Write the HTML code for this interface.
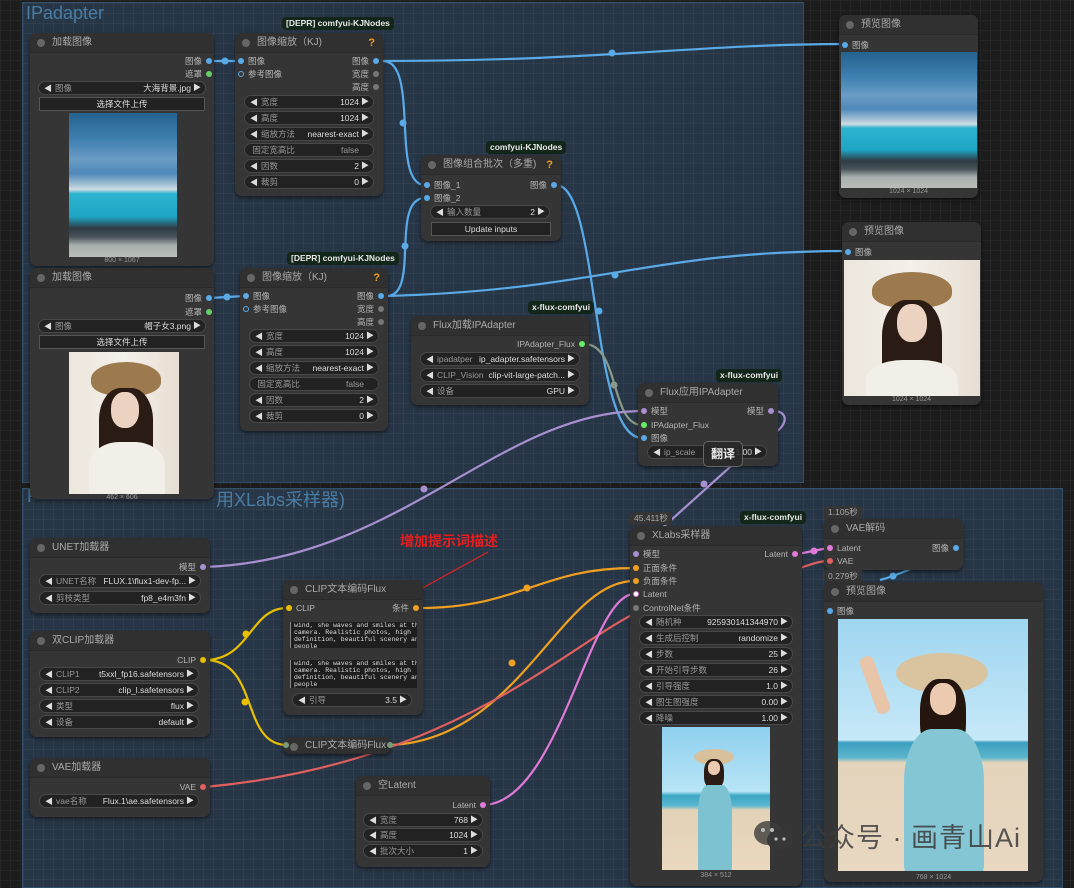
<!DOCTYPE html>
<html><head><meta charset="utf-8"><style>
*{margin:0;padding:0;box-sizing:border-box}
body{width:1074px;height:879px;overflow:hidden;position:relative;font-family:"Liberation Sans","Noto Sans CJK SC",sans-serif;background:#1c1c1c;
background-image:linear-gradient(#252525 1px,transparent 1px),linear-gradient(90deg,#252525 1px,transparent 1px);background-size:10px 10px}
.grp{position:absolute;background-color:#273646;border:1px solid #33506a;
background-image:linear-gradient(rgba(255,255,255,.035) 1px,transparent 1px),linear-gradient(90deg,rgba(255,255,255,.035) 1px,transparent 1px);background-size:10px 10px}
.gt{position:absolute;color:#4a7ca3;font-size:18px;white-space:nowrap}
.n{position:absolute;background:#353535;border-radius:7px;box-shadow:0 2px 4px rgba(0,0,0,.5)}
.t{height:20px;background:#303030;border-radius:7px 7px 0 0;border-bottom:1px solid #2a2a2a;color:#aaa;font-size:10px;line-height:20px;padding-left:22px;position:relative;white-space:nowrap}
.t:before{content:"";position:absolute;left:7px;top:6px;width:8px;height:8px;border-radius:50%;background:#666}
.q{position:absolute;right:8px;top:0;color:#f0a020;font-weight:bold;font-size:11px}
.s{position:absolute;font-size:8.5px;color:#b5b5b5;white-space:nowrap;line-height:10px}
.d{position:absolute;width:6px;height:6px;border-radius:50%}
.w{position:absolute;height:14px;border-radius:8px;background:#222;border:1px solid #484848;font-size:8.5px;color:#ddd;line-height:12px;white-space:nowrap;overflow:hidden}
.w .l{position:absolute;left:5px;color:#999}
.w .l b{color:#ddd;font-weight:normal;font-size:8px;margin-right:3px}
.w .v{position:absolute;right:14px}
.w .r{position:absolute;right:4px;font-size:8px}
.btn{position:absolute;height:14px;background:#222;border:1px solid #555;color:#ddd;font-size:8.5px;text-align:center;line-height:12px}
.bd{position:absolute;background:#12261a;color:#e8e8e8;font-size:8.5px;font-weight:bold;border-radius:4px;padding:0 4px;height:13px;line-height:13px;white-space:nowrap}
.tm{position:absolute;background:#353535;color:#aaa;font-size:8.5px;height:13px;line-height:13px;padding:0 4px;border-radius:4px 4px 0 0}
.cap{position:absolute;font-size:7px;color:#999;text-align:center}
.sea{position:absolute;background:linear-gradient(180deg,#25628f 0%,#3d7fb0 18%,#6a9cc4 32%,#4f88b8 42%,#a8c4d8 50%,#d0dde4 53%,#2cb4cf 56%,#1ea5c4 72%,#2e3b44 80%,#48545a 86%,#a9b0ae 92%,#b9bdb8 100%)}
.ta{position:absolute;background:#1e1e1e;color:#ddd;font-family:"Liberation Mono",monospace;font-size:6.5px;line-height:7px;padding-left:3px;overflow:hidden;border-left:1px solid #888;white-space:nowrap}
</style></head><body>

<div class="grp" style="left:22px;top:2px;width:782px;height:481px"></div>
<div class="gt" style="left:26px;top:3px">IPadapter</div>
<div class="grp" style="left:22px;top:488px;width:1041px;height:400px"></div>
<div class="gt" style="left:27px;top:486px">F</div>
<div class="gt" style="left:216px;top:486px">用XLabs采样器)</div>

<svg width="1074" height="879" style="position:absolute;left:0;top:0" fill="none" stroke-width="2.2">
<g stroke="#5aaae8">
<path d="M210 61 L240 61"/>
<path d="M383 61 C600 61,700 44,844 44"/>
<path d="M383 61 C420 61,390 185,425 185"/>
<path d="M387 296 C420 296,390 198,425 198"/>
<path d="M387 296 C600 290,650 251,848 251"/>
<path d="M210 298 L244 296"/>
<path d="M556 185 C600 185,590 438,642 438"/>
<path d="M958 548 C930 560,900 575,880 580"/>
</g>
<g fill="#5aaae8"><circle cx="225" cy="61" r="3.5"/><circle cx="612" cy="53" r="3.5"/><circle cx="403" cy="123" r="3.5"/><circle cx="405" cy="246" r="3.5"/><circle cx="615" cy="275" r="3.5"/><circle cx="599" cy="311" r="3.5"/><circle cx="227" cy="297" r="3.5"/><circle cx="893" cy="576" r="3.5"/></g>
<path d="M584 344 C620 344,610 425,642 425" stroke="#8a9a88"/><circle cx="614" cy="385" r="3.5" fill="#8a9a88"/>
<g stroke="#a890d0">
<path d="M205 567 C400 560,500 411,642 411"/>
<path d="M774 411 C790 411,790 430,760 440 L660 530 C640 545,630 554,634 554"/>
</g>
<g fill="#a890d0"><circle cx="424" cy="489" r="3.5"/><circle cx="704" cy="484" r="3.5"/></g>
<g stroke="#e8c000"><path d="M205 660 C250 660,250 608,287 608"/><path d="M205 660 C260 660,240 745,287 745"/></g>
<g fill="#e8c000"><circle cx="246" cy="634" r="3.5"/><circle cx="245" cy="702" r="3.5"/></g>
<g stroke="#f0a020"><path d="M419 608 C520 608,540 568,634 568"/><path d="M390 745 C520 740,560 581,634 581"/></g>
<g fill="#f0a020"><circle cx="527" cy="588" r="3.5"/><circle cx="512" cy="663" r="3.5"/></g>
<g stroke="#e06060"><path d="M205 787 C500 760,600 600,680 600 L800 568 C815 563,820 561,828 561"/></g>
<g stroke="#e07ad8"><path d="M485 805 C560 800,590 594,634 594"/><path d="M798 554 L828 548"/></g>
<circle cx="814" cy="551" r="3.5" fill="#e07ad8"/>
<path d="M488 552 L368 618" stroke="#e02020" stroke-width="1.2"/><path d="M362 621 L372 611 L374 619 Z" fill="#e02020" stroke="#e02020"/>
</svg>

<div class="n" style="left:30px;top:33px;width:184px;height:233px"><div class="t">加载图像</div>
<div class="s" style="right:12px;top:23px">图像</div><div class="d" style="right:2px;top:25px;background:#5aaae8"></div>
<div class="s" style="right:12px;top:36px">遮罩</div><div class="d" style="right:2px;top:38px;background:#6c6"></div>
<div class="w" style="left:8px;top:48px;width:168px"><span class="l"><b>◀</b>图像</span><span class="v">大海背景.jpg</span><span class="r">▶</span></div>
<div class="btn" style="left:9px;top:64px;width:166px">选择文件上传</div>
<div class="sea" style="left:39px;top:80px;width:108px;height:144px"></div>
<div class="cap" style="left:0;width:184px;top:224px">800 × 1067</div></div>

<div class="bd" style="left:282px;top:17px">[DEPR] comfyui-KJNodes</div>
<div class="n" style="left:235px;top:33px;width:148px;height:163px"><div class="t">图像缩放（KJ)<span class="q">?</span></div>
<div class="d" style="left:3px;top:25px;background:#5aaae8"></div><div class="s" style="left:13px;top:23px">图像</div>
<div class="d" style="left:3px;top:38px;border:1.5px solid #5aaae8"></div><div class="s" style="left:13px;top:36px">参考图像</div>
<div class="s" style="right:14px;top:23px">图像</div><div class="d" style="right:4px;top:25px;background:#5aaae8"></div>
<div class="s" style="right:14px;top:36px">宽度</div><div class="d" style="right:4px;top:38px;background:#777"></div>
<div class="s" style="right:14px;top:49px">高度</div><div class="d" style="right:4px;top:51px;background:#777"></div>
<div class="w" style="left:9px;top:62px;width:130px"><span class="l"><b>◀</b>宽度</span><span class="v">1024</span><span class="r">▶</span></div>
<div class="w" style="left:9px;top:78px;width:130px"><span class="l"><b>◀</b>高度</span><span class="v">1024</span><span class="r">▶</span></div>
<div class="w" style="left:9px;top:94px;width:130px"><span class="l"><b>◀</b>缩放方法</span><span class="v">nearest-exact</span><span class="r">▶</span></div>
<div class="w" style="left:9px;top:110px;width:130px"><span class="l">&nbsp;固定宽高比</span><span class="v" style="color:#999">false</span></div>
<div class="w" style="left:9px;top:126px;width:130px"><span class="l"><b>◀</b>因数</span><span class="v">2</span><span class="r">▶</span></div>
<div class="w" style="left:9px;top:142px;width:130px"><span class="l"><b>◀</b>裁剪</span><span class="v">0</span><span class="r">▶</span></div></div>

<div class="n" style="left:30px;top:268px;width:184px;height:231px"><div class="t">加载图像</div>
<div class="s" style="right:12px;top:25px">图像</div><div class="d" style="right:2px;top:27px;background:#5aaae8"></div>
<div class="s" style="right:12px;top:39px">遮罩</div><div class="d" style="right:2px;top:41px;background:#6c6"></div>
<div class="w" style="left:8px;top:51px;width:168px"><span class="l"><b>◀</b>图像</span><span class="v">帽子女3.png</span><span class="r">▶</span></div>
<div class="btn" style="left:9px;top:67px;width:166px">选择文件上传</div>
<div style="position:absolute;left:39px;top:84px;width:110px;height:142px;background:linear-gradient(90deg,#ece6dc,#f4f0ea,#e6ded2);overflow:hidden">
<div style="position:absolute;left:22px;top:10px;width:70px;height:34px;border-radius:50% 50% 40% 40%;background:#9c7a4e"></div>
<div style="position:absolute;left:30px;top:36px;width:54px;height:80px;border-radius:40% 40% 10% 10%;background:#2a1c14"></div>
<div style="position:absolute;left:42px;top:40px;width:28px;height:36px;border-radius:45%;background:#ecd2c0"></div>
<div style="position:absolute;left:20px;top:90px;width:76px;height:60px;border-radius:40% 40% 0 0;background:#f2efe8"></div></div>
<div class="cap" style="left:0;width:184px;top:226px">462 × 606</div></div>

<div class="bd" style="left:287px;top:252px">[DEPR] comfyui-KJNodes</div>
<div class="n" style="left:240px;top:268px;width:148px;height:163px"><div class="t">图像缩放（KJ)<span class="q">?</span></div>
<div class="d" style="left:3px;top:25px;background:#5aaae8"></div><div class="s" style="left:13px;top:23px">图像</div>
<div class="d" style="left:3px;top:38px;border:1.5px solid #5aaae8"></div><div class="s" style="left:13px;top:36px">参考图像</div>
<div class="s" style="right:14px;top:23px">图像</div><div class="d" style="right:4px;top:25px;background:#5aaae8"></div>
<div class="s" style="right:14px;top:36px">宽度</div><div class="d" style="right:4px;top:38px;background:#777"></div>
<div class="s" style="right:14px;top:49px">高度</div><div class="d" style="right:4px;top:51px;background:#777"></div>
<div class="w" style="left:9px;top:61px;width:130px"><span class="l"><b>◀</b>宽度</span><span class="v">1024</span><span class="r">▶</span></div>
<div class="w" style="left:9px;top:77px;width:130px"><span class="l"><b>◀</b>高度</span><span class="v">1024</span><span class="r">▶</span></div>
<div class="w" style="left:9px;top:93px;width:130px"><span class="l"><b>◀</b>缩放方法</span><span class="v">nearest-exact</span><span class="r">▶</span></div>
<div class="w" style="left:9px;top:109px;width:130px"><span class="l">&nbsp;固定宽高比</span><span class="v" style="color:#999">false</span></div>
<div class="w" style="left:9px;top:125px;width:130px"><span class="l"><b>◀</b>因数</span><span class="v">2</span><span class="r">▶</span></div>
<div class="w" style="left:9px;top:141px;width:130px"><span class="l"><b>◀</b>裁剪</span><span class="v">0</span><span class="r">▶</span></div></div>

<div class="bd" style="left:486px;top:141px">comfyui-KJNodes</div>
<div class="n" style="left:421px;top:155px;width:140px;height:86px"><div class="t">图像组合批次（多重)<span class="q">?</span></div>
<div class="d" style="left:3px;top:27px;background:#5aaae8"></div><div class="s" style="left:13px;top:25px">图像_1</div>
<div class="d" style="left:3px;top:40px;background:#5aaae8"></div><div class="s" style="left:13px;top:38px">图像_2</div>
<div class="s" style="right:14px;top:25px">图像</div><div class="d" style="right:4px;top:27px;background:#5aaae8"></div>
<div class="w" style="left:9px;top:50px;width:120px"><span class="l"><b>◀</b>输入数量</span><span class="v">2</span><span class="r">▶</span></div>
<div class="btn" style="left:10px;top:67px;width:120px">Update inputs</div></div>

<div class="bd" style="left:528px;top:301px">x-flux-comfyui</div>
<div class="n" style="left:411px;top:316px;width:178px;height:89px"><div class="t">Flux加载IPAdapter</div>
<div class="s" style="right:14px;top:23px">IPAdapter_Flux</div><div class="d" style="right:4px;top:25px;background:#6e6"></div>
<div class="w" style="left:9px;top:36px;width:160px"><span class="l"><b>◀</b>ipadatper</span><span class="v">ip_adapter.safetensors</span><span class="r">▶</span></div>
<div class="w" style="left:9px;top:52px;width:160px"><span class="l"><b>◀</b>CLIP_Vision</span><span class="v">clip-vit-large-patch...</span><span class="r">▶</span></div>
<div class="w" style="left:9px;top:68px;width:160px"><span class="l"><b>◀</b>设备</span><span class="v">GPU</span><span class="r">▶</span></div></div>

<div class="bd" style="left:716px;top:369px">x-flux-comfyui</div>
<div class="n" style="left:638px;top:383px;width:140px;height:83px"><div class="t">Flux应用IPAdapter</div>
<div class="d" style="left:3px;top:25px;background:#a890d0"></div><div class="s" style="left:13px;top:23px">模型</div>
<div class="d" style="left:3px;top:39px;background:#6e6"></div><div class="s" style="left:13px;top:37px">IPAdapter_Flux</div>
<div class="d" style="left:3px;top:52px;background:#5aaae8"></div><div class="s" style="left:13px;top:50px">图像</div>
<div class="s" style="right:14px;top:23px">模型</div><div class="d" style="right:4px;top:25px;background:#a890d0"></div>
<div class="w" style="left:9px;top:62px;width:120px"><span class="l"><b>◀</b>ip_scale</span><span class="v">1.00</span><span class="r">▶</span></div></div>
<div style="position:absolute;left:703px;top:441px;width:40px;height:26px;border:1px solid #666;border-radius:5px;background:rgba(40,40,40,.85);color:#eee;font-size:12px;font-weight:bold;text-align:center;line-height:24px">翻译</div>

<div class="n" style="left:839px;top:15px;width:139px;height:183px"><div class="t">预览图像</div>
<div class="d" style="left:3px;top:27px;background:#5aaae8"></div><div class="s" style="left:13px;top:25px">图像</div>
<div class="sea" style="left:2px;top:37px;width:136px;height:136px"></div>
<div class="cap" style="left:0;width:139px;top:173px">1024 × 1024</div></div>

<div class="n" style="left:842px;top:222px;width:139px;height:183px"><div class="t">预览图像</div>
<div class="d" style="left:3px;top:27px;background:#5aaae8"></div><div class="s" style="left:13px;top:25px">图像</div>
<div style="position:absolute;left:2px;top:38px;width:136px;height:136px;background:linear-gradient(90deg,#ece6dc,#f4f0ea,#e6ded2);overflow:hidden">
<div style="position:absolute;left:28px;top:12px;width:80px;height:36px;border-radius:50% 50% 40% 40%;background:#9c7a4e"></div>
<div style="position:absolute;left:38px;top:40px;width:60px;height:90px;border-radius:40% 40% 10% 10%;background:#2a1c14"></div>
<div style="position:absolute;left:53px;top:44px;width:30px;height:38px;border-radius:45%;background:#ecd2c0"></div>
<div style="position:absolute;left:22px;top:100px;width:92px;height:50px;border-radius:40% 40% 0 0;background:#f2efe8"></div></div>
<div class="cap" style="left:0;width:139px;top:174px">1024 × 1024</div></div>

<div class="n" style="left:30px;top:538px;width:180px;height:75px"><div class="t">UNET加载器</div>
<div class="s" style="right:14px;top:24px">模型</div><div class="d" style="right:4px;top:26px;background:#a890d0"></div>
<div class="w" style="left:9px;top:36px;width:162px"><span class="l"><b>◀</b>UNET名称</span><span class="v">FLUX.1\flux1-dev-fp...</span><span class="r">▶</span></div>
<div class="w" style="left:9px;top:53px;width:162px"><span class="l"><b>◀</b>剪枝类型</span><span class="v">fp8_e4m3fn</span><span class="r">▶</span></div></div>

<div class="n" style="left:30px;top:631px;width:180px;height:106px"><div class="t">双CLIP加载器</div>
<div class="s" style="right:14px;top:24px">CLIP</div><div class="d" style="right:4px;top:26px;background:#e8c000"></div>
<div class="w" style="left:9px;top:36px;width:160px"><span class="l"><b>◀</b>CLIP1</span><span class="v">t5xxl_fp16.safetensors</span><span class="r">▶</span></div>
<div class="w" style="left:9px;top:52px;width:160px"><span class="l"><b>◀</b>CLIP2</span><span class="v">clip_l.safetensors</span><span class="r">▶</span></div>
<div class="w" style="left:9px;top:68px;width:160px"><span class="l"><b>◀</b>类型</span><span class="v">flux</span><span class="r">▶</span></div>
<div class="w" style="left:9px;top:84px;width:160px"><span class="l"><b>◀</b>设备</span><span class="v">default</span><span class="r">▶</span></div></div>

<div class="n" style="left:30px;top:758px;width:180px;height:59px"><div class="t">VAE加载器</div>
<div class="s" style="right:14px;top:24px">VAE</div><div class="d" style="right:4px;top:26px;background:#e06060"></div>
<div class="w" style="left:9px;top:36px;width:160px"><span class="l"><b>◀</b>vae名称</span><span class="v">Flux.1\ae.safetensors</span><span class="r">▶</span></div></div>

<div class="n" style="left:283px;top:580px;width:140px;height:135px"><div class="t">CLIP文本编码Flux</div>
<div class="d" style="left:3px;top:25px;background:#e8c000"></div><div class="s" style="left:13px;top:23px">CLIP</div>
<div class="s" style="right:14px;top:23px">条件</div><div class="d" style="right:4px;top:25px;background:#f0a020"></div>
<div class="ta" style="left:7px;top:42px;width:127px;height:26px;padding-top:0">wind, she waves and smiles at the<br>camera. Realistic photos, high<br>definition, beautiful scenery and<br>people</div>
<div class="ta" style="left:7px;top:80px;width:127px;height:28px">wind, she waves and smiles at the<br>camera. Realistic photos, high<br>definition, beautiful scenery and<br>people</div>
<div class="w" style="left:9px;top:113px;width:120px"><span class="l"><b>◀</b>引导</span><span class="v">3.5</span><span class="r">▶</span></div></div>

<div class="n" style="left:283px;top:737px;width:108px;height:17px"><div class="t" style="height:17px;line-height:17px;border-radius:7px">CLIP文本编码Flux</div></div>
<div class="d" style="left:283px;top:742px;background:#7a9a7a"></div><div class="d" style="left:387px;top:742px;background:#7a9a7a"></div>

<div style="position:absolute;left:400px;top:531px;color:#e81c1c;font-size:14px;font-weight:bold">增加提示词描述</div>

<div class="n" style="left:356px;top:776px;width:134px;height:91px"><div class="t">空Latent</div>
<div class="s" style="right:14px;top:24px">Latent</div><div class="d" style="right:4px;top:26px;background:#e07ad8"></div>
<div class="w" style="left:7px;top:37px;width:120px"><span class="l"><b>◀</b>宽度</span><span class="v">768</span><span class="r">▶</span></div>
<div class="w" style="left:7px;top:52px;width:120px"><span class="l"><b>◀</b>高度</span><span class="v">1024</span><span class="r">▶</span></div>
<div class="w" style="left:7px;top:68px;width:120px"><span class="l"><b>◀</b>批次大小</span><span class="v">1</span><span class="r">▶</span></div></div>

<div class="tm" style="left:630px;top:512px">45.411秒</div>
<div class="bd" style="left:740px;top:511px">x-flux-comfyui</div>
<div class="n" style="left:630px;top:526px;width:172px;height:360px"><div class="t">XLabs采样器</div>
<div class="d" style="left:3px;top:25px;background:#a890d0"></div><div class="s" style="left:13px;top:23px">模型</div>
<div class="d" style="left:3px;top:39px;background:#f0a020"></div><div class="s" style="left:13px;top:37px">正面条件</div>
<div class="d" style="left:3px;top:52px;background:#f0a020"></div><div class="s" style="left:13px;top:50px">负面条件</div>
<div class="d" style="left:3px;top:65px;border:1.5px solid #e07ad8;background:#fff"></div><div class="s" style="left:13px;top:63px">Latent</div>
<div class="d" style="left:3px;top:79px;background:#777"></div><div class="s" style="left:13px;top:77px">ControlNet条件</div>
<div class="s" style="right:14px;top:23px">Latent</div><div class="d" style="right:4px;top:25px;background:#e07ad8"></div>
<div class="w" style="left:9px;top:89px;width:154px"><span class="l"><b>◀</b>随机种</span><span class="v">925930141344970</span><span class="r">▶</span></div>
<div class="w" style="left:9px;top:105px;width:154px"><span class="l"><b>◀</b>生成后控制</span><span class="v">randomize</span><span class="r">▶</span></div>
<div class="w" style="left:9px;top:121px;width:154px"><span class="l"><b>◀</b>步数</span><span class="v">25</span><span class="r">▶</span></div>
<div class="w" style="left:9px;top:137px;width:154px"><span class="l"><b>◀</b>开始引导步数</span><span class="v">26</span><span class="r">▶</span></div>
<div class="w" style="left:9px;top:153px;width:154px"><span class="l"><b>◀</b>引导强度</span><span class="v">1.0</span><span class="r">▶</span></div>
<div class="w" style="left:9px;top:169px;width:154px"><span class="l"><b>◀</b>图生图强度</span><span class="v">0.00</span><span class="r">▶</span></div>
<div class="w" style="left:9px;top:185px;width:154px"><span class="l"><b>◀</b>降噪</span><span class="v">1.00</span><span class="r">▶</span></div>
<div style="position:absolute;left:32px;top:201px;width:108px;height:143px;background:linear-gradient(180deg,#8ed0ef 0%,#b8e4f6 45%,#3aa6c4 48%,#5ab8d0 55%,#e2d2b8 58%,#ead9bf 100%);overflow:hidden">
<div style="position:absolute;left:32px;top:22px;width:40px;height:16px;border-radius:50%;background:#d8c09a"></div>
<div style="position:absolute;left:42px;top:32px;width:20px;height:30px;border-radius:40%;background:#2a1c14"></div>
<div style="position:absolute;left:46px;top:34px;width:12px;height:14px;border-radius:45%;background:#eccab0"></div>
<div style="position:absolute;left:36px;top:58px;width:34px;height:90px;border-radius:30% 30% 10% 10%;background:#7cc2d0"></div></div>
<div class="cap" style="left:0;width:172px;top:346px">384 × 512</div></div>

<div class="tm" style="left:824px;top:506px">1.105秒</div>
<div class="n" style="left:824px;top:519px;width:139px;height:51px"><div class="t">VAE解码</div>
<div class="d" style="left:3px;top:26px;background:#e07ad8"></div><div class="s" style="left:13px;top:24px">Latent</div>
<div class="d" style="left:3px;top:39px;background:#e06060"></div><div class="s" style="left:13px;top:37px">VAE</div>
<div class="s" style="right:14px;top:24px">图像</div><div class="d" style="right:4px;top:26px;background:#5aaae8"></div></div>
<div class="tm" style="left:824px;top:570px;border-radius:0 0 4px 4px">0.279秒</div>

<div class="n" style="left:824px;top:582px;width:219px;height:300px"><div class="t">预览图像</div>
<div class="d" style="left:3px;top:26px;background:#5aaae8"></div><div class="s" style="left:13px;top:24px">图像</div>
<div style="position:absolute;left:14px;top:37px;width:190px;height:252px;background:linear-gradient(180deg,#9fd6f0 0%,#c6e8f8 48%,#3c9fc0 49%,#5cb6cc 55%,#e4d4bc 57%,#e8d8c2 100%);overflow:hidden">
<div style="position:absolute;left:58px;top:34px;width:92px;height:40px;border-radius:50%;background:#dac4a0"></div>
<div style="position:absolute;left:82px;top:60px;width:46px;height:76px;border-radius:40%;background:#24160f"></div>
<div style="position:absolute;left:92px;top:64px;width:26px;height:32px;border-radius:45%;background:#eccab0"></div>
<div style="position:absolute;left:30px;top:36px;width:14px;height:60px;border-radius:6px;background:#e8c4a8;transform:rotate(-20deg)"></div>
<div style="position:absolute;left:66px;top:110px;width:80px;height:150px;border-radius:35% 35% 10% 10%;background:#84c6d4"></div></div>
<div class="cap" style="left:0;width:219px;top:292px">768 × 1024</div></div>

<svg width="44" height="34" style="position:absolute;left:752px;top:819px" viewBox="0 0 44 34"><ellipse cx="16" cy="14" rx="14" ry="12" fill="rgba(60,60,60,.8)"/><ellipse cx="28" cy="21" rx="13" ry="11" fill="rgba(55,55,55,.9)"/><circle cx="11" cy="11" r="2" fill="#bbb"/><circle cx="20" cy="11" r="2" fill="#bbb"/><circle cx="24" cy="20" r="1.6" fill="#bbb"/><circle cx="32" cy="20" r="1.6" fill="#bbb"/></svg>
<div style="position:absolute;left:800px;top:816px;font-size:27px;color:rgba(60,60,60,.85);white-space:nowrap;letter-spacing:1px">公众号 · 画青山Ai</div>
</body></html>
